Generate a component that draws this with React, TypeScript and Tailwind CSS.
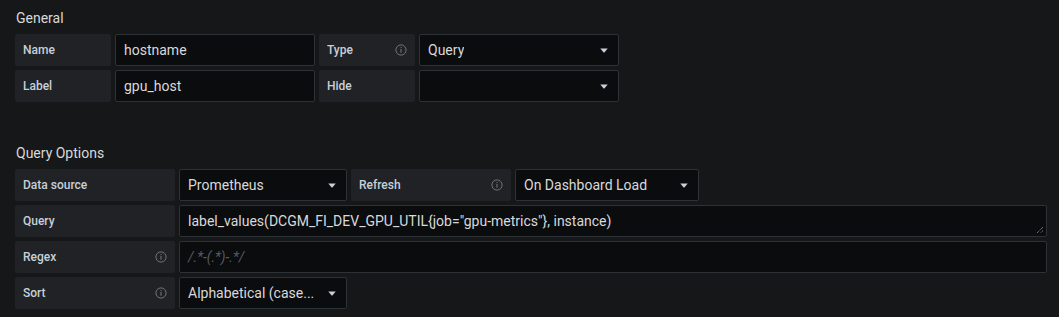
import React from "react";

const Info = () => (
  <svg width="12" height="12" viewBox="0 0 12 12" className="shrink-0">
    <circle cx="6" cy="6" r="5.1" fill="none" stroke="#6f757c" strokeWidth="1" />
    <rect x="5.45" y="5.1" width="1.1" height="3.6" rx="0.5" fill="#6f757c" />
    <circle cx="6" cy="3.6" r="0.7" fill="#6f757c" />
  </svg>
);

const Caret = () => (
  <svg width="8" height="5" viewBox="0 0 8 5" className="shrink-0">
    <path d="M0.3 0.4 L7.7 0.4 L4.4 4.4 Q4 4.8 3.6 4.4 Z" fill="#c7d0d9" />
  </svg>
);

const Label = ({ text, w, info }: { text: string; w: string; info?: boolean }) => (
  <div
    className={`${w} h-[32px] shrink-0 bg-[#202226] rounded-[2px] pl-[8px] pr-[8px] flex items-center justify-between text-[12px] font-medium text-[#c7d0d9]`}
  >
    <span>{text}</span>
    {info ? <Info /> : null}
  </div>
);

const Input = ({ value, w }: { value: string; w: string }) => (
  <div
    className={`${w} h-[32px] shrink-0 bg-[#0b0c0e] border border-[#2c3235] rounded-[2px] px-[8px] flex items-center text-[14px] text-[#d8d9da]`}
  >
    {value}
  </div>
);

const Select = ({ value, w }: { value: string; w: string }) => (
  <div
    className={`${w} h-[32px] shrink-0 bg-[#0b0c0e] border border-[#2c3235] rounded-[2px] pl-[8px] pr-[10px] flex items-center justify-between text-[14px] text-[#d8d9da]`}
  >
    <span className="truncate">{value}</span>
    <Caret />
  </div>
);

export default function App() {
  return (
    <div
      className="w-full h-[317px] bg-[#161719] pl-[15px] pt-[8px] overflow-hidden"
      style={{ fontFamily: "Roboto, 'Liberation Sans', sans-serif" }}
    >
      <div className="text-[14px] leading-[20px] text-[#d8d9da] pl-[1px] mb-[6px]">General</div>
      <div className="flex flex-col gap-[4px]">
        <div className="flex gap-[4px]">
          <Label text="Name" w="w-[96px]" />
          <Input value="hostname" w="w-[200px]" />
          <Label text="Type" w="w-[96px]" info />
          <Select value="Query" w="w-[200px]" />
        </div>
        <div className="flex gap-[4px]">
          <Label text="Label" w="w-[96px]" />
          <Input value="gpu_host" w="w-[200px]" />
          <Label text="Hide" w="w-[96px]" />
          <Select value="" w="w-[200px]" />
        </div>
      </div>

      <div className="text-[14px] leading-[20px] text-[#d8d9da] pl-[1px] mt-[41px] mb-[6px]">Query Options</div>
      <div className="flex flex-col gap-[4px]">
        <div className="flex gap-[4px]">
          <Label text="Data source" w="w-[160px]" />
          <Select value="Prometheus" w="w-[168px]" />
          <Label text="Refresh" w="w-[160px]" info />
          <Select value="On Dashboard Load" w="w-[184px]" />
        </div>
        <div className="flex gap-[4px]">
          <Label text="Query" w="w-[160px]" />
          <div className="relative w-[868px] h-[32px] shrink-0 bg-[#0b0c0e] border border-[#2c3235] rounded-[2px] px-[8px] flex items-center text-[14px] text-[#d8d9da]">
            {'label_values(DCGM_FI_DEV_GPU_UTIL{job="gpu-metrics"}, instance)'}
            <svg width="8" height="8" viewBox="0 0 8 8" className="absolute right-[2px] bottom-[2px]">
              <path d="M7 1 L1 7 M7 4.5 L4.5 7" stroke="#9a9a9a" strokeWidth="1" strokeDasharray="1 0.8" />
            </svg>
          </div>
        </div>
        <div className="flex gap-[4px]">
          <Label text="Regex" w="w-[160px]" info />
          <div className="w-[868px] h-[32px] shrink-0 bg-[#0b0c0e] border border-[#2c3235] rounded-[2px] px-[8px] flex items-center text-[14px] italic text-[#555a60]">
            /.*-(.*)-.*/
          </div>
        </div>
        <div className="flex gap-[4px]">
          <Label text="Sort" w="w-[160px]" info />
          <Select value="Alphabetical (case..." w="w-[168px]" />
        </div>
      </div>
    </div>
  );
}
